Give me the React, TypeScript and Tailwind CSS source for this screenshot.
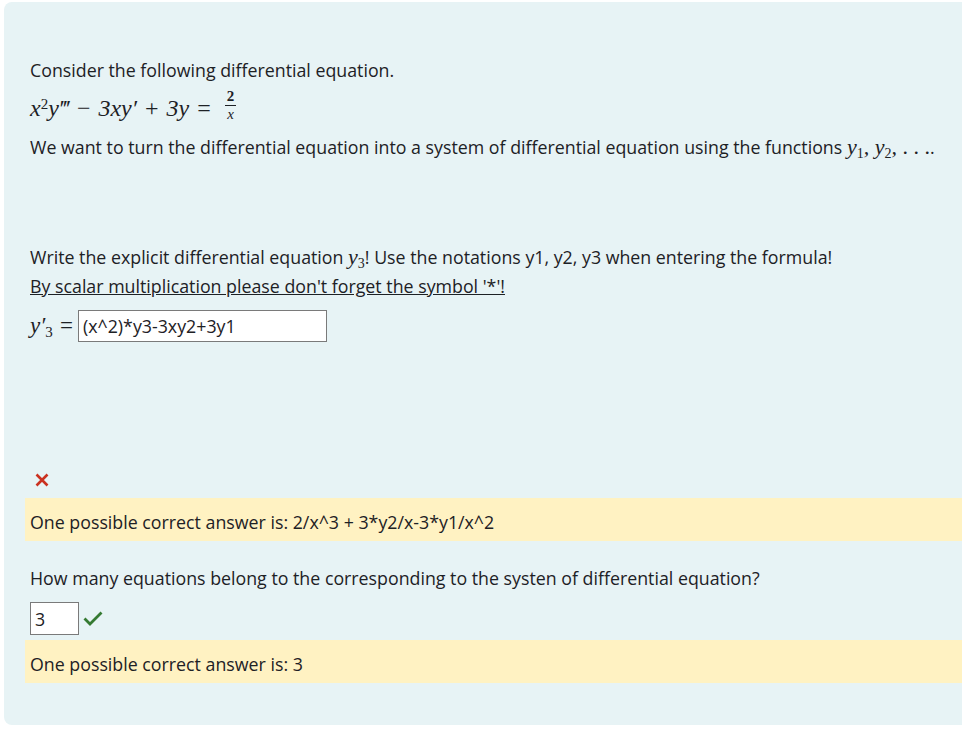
const mathFont = { fontFamily: '"Liberation Serif", "DejaVu Serif", serif' };

function M({ children, size = "text-[22px]" }: { children: React.ReactNode; size?: string }) {
  return (
    <span className={`italic leading-none ${size}`} style={mathFont}>
      {children}
    </span>
  );
}

function Op({ children }: { children: React.ReactNode }) {
  return <span className="not-italic mx-[8px]">{children}</span>;
}

function Frac() {
  return (
    <span className="inline-flex flex-col items-center align-middle ml-[6px] leading-none text-[15px] -translate-y-[3px]">
      <span className="not-italic font-bold px-[2px]">2</span>
      <span className="h-px w-full bg-[#1d2125] my-[1px]" />
      <span className="italic">x</span>
    </span>
  );
}

function Outcome({ children }: { children: React.ReactNode }) {
  return (
    <div className="bg-[#fff2c2] h-[43px] flex items-center pl-[5px] pt-[6px]">
      {children}
    </div>
  );
}

export default function App() {
  return (
    <div
      className="min-h-[744px] bg-white pt-[2px] pl-[4px] text-[17.8px] text-[#1d2125]"
      style={{ fontFamily: '"Open Sans", "Noto Sans", sans-serif' }}
    >
      <div className="bg-[#e7f3f5] rounded-l-lg h-[723px] pl-[21px] pt-[54px]">
        <div className="pl-[5px]">
          <p className="leading-[28px]">Consider the following differential equation.</p>
          <p className="mt-[10px] h-[28px] leading-[28px] flex items-center">
            <M size="text-[24px]">
              x<sup className="text-[15px] not-italic">2</sup>y‴<Op>−</Op>3xy′<Op>+</Op>3y<Op>=</Op>
            </M>
            <span style={mathFont}>
              <Frac />
            </span>
          </p>
          <p className="mt-[11px] leading-[28px]">
            We want to turn the differential equation into a system of differential equation using the functions{" "}
            <M>
              y<sub className="not-italic text-[14px]">1</sub>, y<sub className="not-italic text-[14px]">2</sub>,{" "}
              <span className="not-italic">. . .</span>
            </M>
            .
          </p>

          <p className="mt-[82px] leading-[28px]">
            Write the explicit differential equation{" "}
            <M>
              y<sub className="not-italic text-[14px]">3</sub>
            </M>
            ! Use the notations y1, y2, y3 when entering the formula!
          </p>
          <p className="mt-[1px] leading-[28px]">
            <span className="underline">By scalar multiplication please don't forget the symbol '*'!</span>
          </p>
          <div className="mt-[10px] flex items-center h-[32px]">
            <span className="w-[30px] italic text-[23px]" style={mathFont}>
              y′<sub className="not-italic text-[15px]">3</sub>
            </span>
            <span className="text-[23px] mr-[5px]" style={mathFont}>
              =
            </span>
            <input
              readOnly
              value="(x^2)*y3-3xy2+3y1"
              className="w-[249px] h-[32px] border border-[#7a7a7a] bg-white px-[4px] outline-none"
            />
          </div>

          <div className="mt-[128px] h-[20px] flex items-center">
            <svg width="14" height="14" viewBox="0 0 14 14" className="ml-[5px]">
              <path d="M1.5 1.5 L12.5 12.5 M12.5 1.5 L1.5 12.5" stroke="#ca3120" strokeWidth="2.6" />
            </svg>
          </div>
        </div>

        <div className="mt-[8px]">
          <Outcome>One possible correct answer is: 2/x^3 + 3*y2/x-3*y1/x^2</Outcome>
        </div>

        <div className="pl-[5px]">
          <p className="mt-[23px] leading-[28px]">
            How many equations belong to the corresponding to the systen of differential equation?
          </p>
          <div className="mt-[10px] flex items-center h-[33px]">
            <input
              readOnly
              value="3"
              className="w-[49px] h-[33px] border border-[#7a7a7a] bg-white px-[4px] outline-none"
            />
            <svg width="20" height="16" viewBox="0 0 20 16" className="ml-[4px]">
              <path d="M1.5 7.5 L7 13 L18.5 1.5" stroke="#357a32" strokeWidth="2.8" fill="none" />
            </svg>
          </div>
        </div>

        <div className="mt-[5px]">
          <Outcome>One possible correct answer is: 3</Outcome>
        </div>
      </div>
    </div>
  );
}
